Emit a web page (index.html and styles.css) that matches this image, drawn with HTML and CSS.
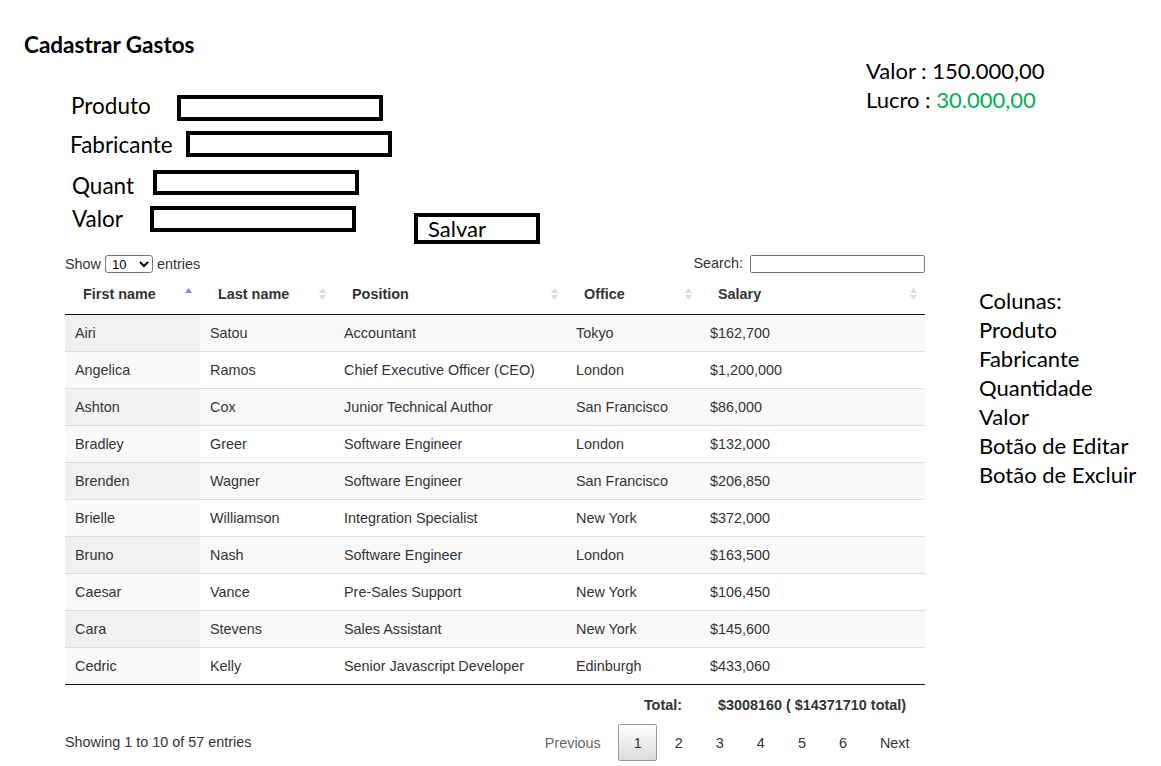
FILE: index.html
```html
<!DOCTYPE html>
<html lang="pt">
<head>
<meta charset="utf-8">
<title>Cadastrar Gastos</title>
<link rel="stylesheet" href="styles.css">
</head>
<body>
<div class="top">
  <div class="left">
    <h1 class="title">Cadastrar Gastos</h1>
    <div class="form">
      <div class="frow r1"><span class="lbl">Produto</span><input class="box" type="text"></div>
      <div class="frow r2"><span class="lbl">Fabricante</span><input class="box" type="text"></div>
      <div class="frow r3"><span class="lbl">Quant</span><input class="box" type="text"></div>
      <div class="frow r4"><span class="lbl">Valor</span><input class="box" type="text"><button class="save">Salvar</button></div>
    </div>
  </div>
  <div class="summary">
    <div>Valor : 150.000,00</div>
    <div>Lucro : <span class="green">30.000,00</span></div>
  </div>
</div>

<div class="bottom">
  <div class="dt">
    <div class="controls">
      <label class="length">Show <select><option>10</option><option>25</option></select> entries</label>
      <label class="filter">Search: <input type="search"></label>
    </div>
    <table class="grid">
      <colgroup><col class="c1"><col class="c2"><col class="c3"><col class="c4"><col class="c5"></colgroup>
      <thead>
        <tr>
          <th><div class="thc"><span>First name</span><svg class="si" width="7" height="14" viewBox="0 0 7 14"><path d="M0 6 L3.5 1 L7 6 Z" fill="#8a8ad8"/></svg></div></th>
          <th><div class="thc"><span>Last name</span><svg class="si" width="7" height="14" viewBox="0 0 7 14"><path d="M0 6 L3.5 1 L7 6 Z" fill="#dcdcdc"/><path d="M0 8 L3.5 13 L7 8 Z" fill="#dcdcdc"/></svg></div></th>
          <th><div class="thc"><span>Position</span><svg class="si" width="7" height="14" viewBox="0 0 7 14"><path d="M0 6 L3.5 1 L7 6 Z" fill="#dcdcdc"/><path d="M0 8 L3.5 13 L7 8 Z" fill="#dcdcdc"/></svg></div></th>
          <th><div class="thc"><span>Office</span><svg class="si" width="7" height="14" viewBox="0 0 7 14"><path d="M0 6 L3.5 1 L7 6 Z" fill="#dcdcdc"/><path d="M0 8 L3.5 13 L7 8 Z" fill="#dcdcdc"/></svg></div></th>
          <th><div class="thc"><span>Salary</span><svg class="si" width="7" height="14" viewBox="0 0 7 14"><path d="M0 6 L3.5 1 L7 6 Z" fill="#dcdcdc"/><path d="M0 8 L3.5 13 L7 8 Z" fill="#dcdcdc"/></svg></div></th>
        </tr>
      </thead>
      <tbody>
        <tr><td>Airi</td><td>Satou</td><td>Accountant</td><td>Tokyo</td><td>$162,700</td></tr>
        <tr><td>Angelica</td><td>Ramos</td><td>Chief Executive Officer (CEO)</td><td>London</td><td>$1,200,000</td></tr>
        <tr><td>Ashton</td><td>Cox</td><td>Junior Technical Author</td><td>San Francisco</td><td>$86,000</td></tr>
        <tr><td>Bradley</td><td>Greer</td><td>Software Engineer</td><td>London</td><td>$132,000</td></tr>
        <tr><td>Brenden</td><td>Wagner</td><td>Software Engineer</td><td>San Francisco</td><td>$206,850</td></tr>
        <tr><td>Brielle</td><td>Williamson</td><td>Integration Specialist</td><td>New York</td><td>$372,000</td></tr>
        <tr><td>Bruno</td><td>Nash</td><td>Software Engineer</td><td>London</td><td>$163,500</td></tr>
        <tr><td>Caesar</td><td>Vance</td><td>Pre-Sales Support</td><td>New York</td><td>$106,450</td></tr>
        <tr><td>Cara</td><td>Stevens</td><td>Sales Assistant</td><td>New York</td><td>$145,600</td></tr>
        <tr><td>Cedric</td><td>Kelly</td><td>Senior Javascript Developer</td><td>Edinburgh</td><td>$433,060</td></tr>
      </tbody>
      <tfoot>
        <tr><th colspan="4" class="tot">Total:</th><th>$3008160 ( $14371710 total)</th></tr>
      </tfoot>
    </table>
    <div class="dtfoot">
      <div class="info">Showing 1 to 10 of 57 entries</div>
      <div class="paging">
        <a class="pb disabled">Previous</a><a class="pb current">1</a><a class="pb">2</a><a class="pb">3</a><a class="pb">4</a><a class="pb">5</a><a class="pb">6</a><a class="pb">Next</a>
      </div>
    </div>
  </div>
  <div class="cols">
    <div>Colunas:</div>
    <div>Produto</div>
    <div>Fabricante</div>
    <div>Quantidade</div>
    <div>Valor</div>
    <div>Botão de Editar</div>
    <div>Botão de Excluir</div>
  </div>
</div>
</body>
</html>
```

FILE: styles.css
```css
* { box-sizing: border-box; }
html, body { margin: 0; padding: 0; background: #fff; }
body { font-family: Lato, "Open Sans", sans-serif; color: #000; width: 1161px; }

.top { display: flex; }
.left { width: 866px; padding-left: 24px; }
.title { margin: 0; padding-top: 32px; font-size: 22.5px; line-height: 26px; font-weight: 700; }

.form { padding-left: 47px; }
.frow { display: flex; align-items: flex-start; height: 26px; }
.lbl { font-size: 22.5px; line-height: 26px; }
.box { height: 26px; width: 206px; border: 4px solid #000; border-radius: 0; margin: 0; padding: 0; background: #fff; outline: none; }
.r1 { margin-top: 37px; }
.r1 .lbl { width: 106px; line-height: 22px; }
.r2 { margin-top: 10px; }
.r2 .lbl { width: 116px; margin-left: -1px; line-height: 28px; }
.r3 { margin-top: 13px; height: 25px; }
.r3 .lbl { width: 81px; margin-left: 1px; line-height: 31px; }
.r3 .box { height: 25px; }
.r4 { margin-top: 11px; height: 38px; }
.r4 .lbl { width: 78px; margin-left: 1px; }
.save { margin-left: 58px; margin-top: 7px; width: 126px; height: 31px; border: 4px solid #000; background: #fff; font-family: Lato, sans-serif; font-size: 22px; line-height: 18px; text-align: left; padding: 0 0 0 10px; border-radius: 0; color: #000; }

.summary { padding-top: 56px; font-size: 22px; line-height: 29px; }
.green { color: #00b050; }

.bottom { display: flex; align-items: flex-start; }
.dt { margin-left: 65px; width: 860px; font-family: "Liberation Sans", Arial, sans-serif; font-size: 14.4px; color: #333; }
.controls { display: flex; justify-content: space-between; align-items: center; margin-top: 10px; height: 20px; }
.length select { font-family: "Liberation Sans", Arial, sans-serif; font-size: 13px; height: 18px; width: 48px; padding: 0 0 0 2px; border: 1px solid #767676; border-radius: 3px; background: #fff; color: #000; }
.filter input { width: 175px; height: 18px; border: 1px solid #767676; border-radius: 2px; margin-left: 3px; padding: 0 3px; vertical-align: middle; }

.grid { width: 860px; border-collapse: separate; border-spacing: 0; table-layout: fixed; margin-top: 0; }
.c1 { width: 135px; } .c2 { width: 134px; } .c3 { width: 232px; } .c4 { width: 134px; } .c5 { width: 225px; }
.grid thead th { text-align: left; font-weight: 700; padding: 10px 8px 10px 18px; line-height: 20px; border-bottom: 1px solid #111; }
.thc { display: flex; justify-content: space-between; align-items: center; }
.si { display: block; }
.grid td { padding: 8px 10px; line-height: 20px; border-top: 1px solid #ddd; white-space: nowrap; overflow: hidden; }
.grid tbody tr:first-child td { border-top: none; }
.grid tbody tr:nth-child(odd) td { background: #f9f9f9; }
.grid tbody tr:nth-child(odd) td:first-child { background: #f1f1f1; }
.grid tbody tr:nth-child(even) td:first-child { background: #fafafa; }
.grid tbody tr:last-child td { border-bottom: 1px solid #111; }
.grid tfoot th { text-align: left; font-weight: 700; padding: 10px 18px 6px 18px; line-height: 20px; }
.grid tfoot th.tot { text-align: right; }

.dtfoot { display: flex; justify-content: space-between; align-items: flex-start; }
.info { padding-top: 11px; line-height: 20px; }
.paging { display: flex; padding-top: 3px; }
.pb { display: block; padding: 7.5px 14.5px; margin-left: 2px; line-height: 20px; border: 1px solid transparent; border-radius: 2px; color: #333; cursor: pointer; }
.pb.disabled { color: #666; }
.pb.current { border-color: #979797; background: linear-gradient(to bottom, #fff 0%, #dcdcdc 100%); }

.cols { margin-left: 54px; padding-top: 42px; font-size: 22px; line-height: 29px; }
```
